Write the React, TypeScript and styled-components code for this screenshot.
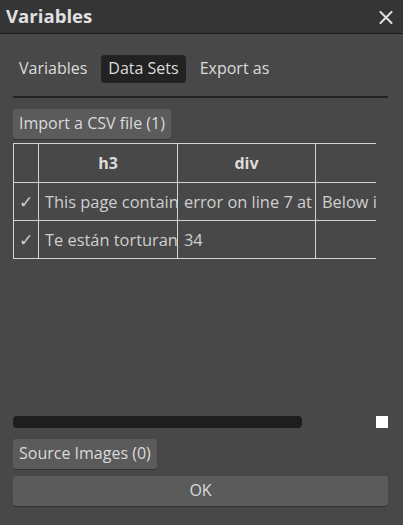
import styled, { createGlobalStyle } from "styled-components";

const GlobalStyle = createGlobalStyle`
  html, body {
    margin: 0;
    padding: 0;
    background: #484848;
  }
  body {
    font-family: "Open Sans", "DejaVu Sans", sans-serif;
    font-size: 16px;
    color: #d8d8d8;
  }
`;

type Row = { checked: boolean; cells: string[] };

const columns = ["h3", "div", ""];

const rows: Row[] = [
  {
    checked: true,
    cells: [
      "This page contains the following errors:",
      "error on line 7 at column 12: Opening and ending tag mismatch",
      "Below is a rendering of the page up to the first error.",
    ],
  },
  { checked: true, cells: ["Te están torturando", "34", ""] },
];

function CloseIcon() {
  return (
    <svg width="14" height="13" viewBox="0 0 14 13">
      <path d="M1.5 1 L12.5 12 M12.5 1 L1.5 12" stroke="#e0e0e0" strokeWidth="2" strokeLinecap="round" />
    </svg>
  );
}

export default function App() {
  return (
    <Dialog>
      <GlobalStyle />
      <TitleBar>
        <Title>Variables</Title>
        <CloseButton aria-label="close">
          <CloseIcon />
        </CloseButton>
      </TitleBar>

      <Body>
        <Tabs>
          <Tab>Variables</Tab>
          <Tab $active>Data Sets</Tab>
          <Tab>Export as</Tab>
        </Tabs>
        <Divider />

        <SmallButton>Import a CSV file (1)</SmallButton>

        <ScrollArea>
          <TableViewport>
            <DataTable>
              <colgroup>
                <col style={{ width: 25 }} />
                <col style={{ width: 139 }} />
                <col style={{ width: 138 }} />
                <col style={{ width: 139 }} />
              </colgroup>
              <thead>
                <tr>
                  <HeadCell />
                  {columns.map((c, i) => (
                    <HeadCell key={i}>{c}</HeadCell>
                  ))}
                </tr>
              </thead>
              <tbody>
                {rows.map((r, i) => (
                  <tr key={i}>
                    <CheckCell>{r.checked ? "✓" : ""}</CheckCell>
                    {r.cells.map((c, j) => (
                      <Cell key={j}>{c}</Cell>
                    ))}
                  </tr>
                ))}
              </tbody>
            </DataTable>
          </TableViewport>
          <VerticalTrack />
        </ScrollArea>

        <HScrollbar>
          <HThumb />
          <Corner />
        </HScrollbar>

        <SmallButton>Source Images (0)</SmallButton>
        <WideButton>OK</WideButton>
      </Body>
    </Dialog>
  );
}

const Dialog = styled.div`
  display: flex;
  flex-direction: column;
  height: 525px;
  background: #484848;
`;

const TitleBar = styled.div`
  display: flex;
  align-items: center;
  justify-content: space-between;
  height: 33px;
  padding: 0 10px 0 6px;
  background: #353535;
  border-bottom: 1px solid #1c1c1c;
`;

const Title = styled.div`
  font-size: 18.6px;
  font-weight: 700;
  color: #e0e0e0;
  margin-top: -2px;
`;

const CloseButton = styled.div`
  display: flex;
  align-items: center;
  margin-top: 1px;
`;

const Body = styled.div`
  flex: 1;
  display: flex;
  flex-direction: column;
  padding: 21px 15px 19px 13px;
  min-height: 0;
`;

const Tabs = styled.div`
  display: flex;
  gap: 7px;
  margin-left: -1px;
`;

const Tab = styled.div<{ $active?: boolean }>`
  height: 28px;
  line-height: 27px;
  padding: 0 7px;
  border-radius: 4px;
  background: ${p => (p.$active ? "#222222" : "transparent")};
  color: #dcdcdc;
`;

const Divider = styled.div`
  height: 2px;
  background: #232323;
  margin-top: 13px;
`;

const SmallButton = styled.div`
  align-self: flex-start;
  height: 30px;
  line-height: 29px;
  padding: 0 6px;
  margin-top: 11px;
  background: #5b5b5b;
  border-radius: 3px;
  box-shadow: 0 1px 0 #333;
  color: #dadada;
  white-space: nowrap;

  & + & {
    margin-top: 4px;
  }
`;

const WideButton = styled.div`
  height: 30px;
  line-height: 29px;
  margin-top: 7px;
  background: #5b5b5b;
  border-radius: 3px;
  box-shadow: 0 1px 0 #333;
  color: #dadada;
  text-align: center;
`;

const ScrollArea = styled.div`
  flex: 1;
  display: flex;
  margin-top: 4px;
  min-height: 0;
`;

const TableViewport = styled.div`
  flex: 1;
  overflow: hidden;
`;

const VerticalTrack = styled.div`
  width: 12px;
`;

const DataTable = styled.table`
  border-collapse: collapse;
  table-layout: fixed;
  width: 441px;
  font-size: 16.4px;
`;

const HeadCell = styled.th`
  height: 38px;
  padding: 0 6px;
  border: 1px solid #d4d4d4;
  font-weight: 700;
  font-size: 16px;
  text-align: center;
  color: #dcdcdc;
  white-space: nowrap;
  overflow: hidden;
`;

const Cell = styled.td`
  height: 37px;
  padding: 0 0 0 6px;
  border: 1px solid #d4d4d4;
  color: #cfcfcf;
  white-space: nowrap;
  overflow: hidden;
`;

const CheckCell = styled(Cell)`
  padding: 0;
  text-align: center;
  font-family: "DejaVu Sans", sans-serif;
  font-size: 17px;
  font-weight: 300;
`;

const HScrollbar = styled.div`
  display: flex;
  justify-content: space-between;
  height: 12px;
`;

const HThumb = styled.div`
  width: 289px;
  height: 12px;
  border-radius: 4px;
  background: #1e1e1e;
`;

const Corner = styled.div`
  width: 12px;
  height: 12px;
  background: #ffffff;
`;
